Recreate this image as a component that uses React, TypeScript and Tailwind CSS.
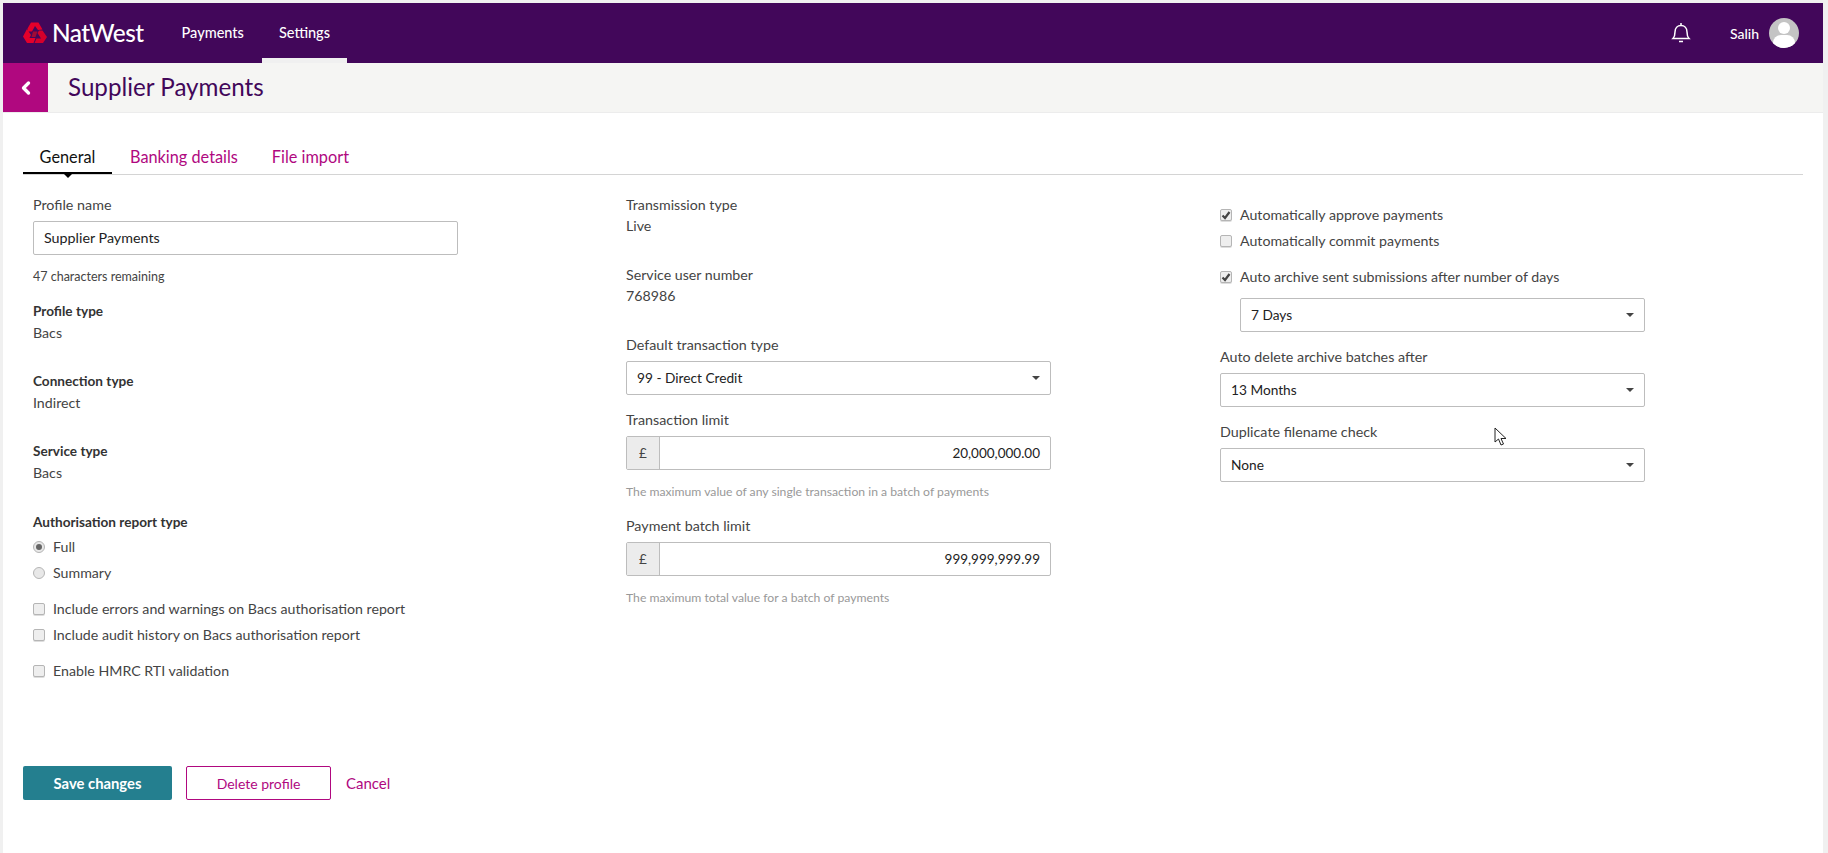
import { ChevronLeft } from "lucide-react"

const font = "font-['Lato','Open_Sans',sans-serif]"

const Logo = () => (
  <svg width="24" height="22" viewBox="0 0 24 22" className="shrink-0">
    <path d="M8 0.5 H15.5 L19.5 7.5 L15 8 L12 4 L9 9.5 H5 L4.5 6.5 Z" fill="#e4002b" />
    <path d="M4 7 L8 13 L6.5 16 H12.5 L10.5 21 H4 L0 14.5 Z" fill="#e4002b" />
    <path d="M16 8.5 H19.5 L24 15 L20 21 H11.5 L13.5 16.5 H18 L14.5 11 Z" fill="#d4002b" />
    <path d="M10 9.5 H14.5 L12.5 15 H8.5 Z" fill="#a00a35" />
  </svg>
)

const Caret = () => <span className="border-x-[4px] border-t-[4px] border-x-transparent border-t-[#444]" />

const Select = ({ value, className = "w-[425px]" }: { value: string; className?: string }) => (
  <div className={`${className} flex h-[34px] items-center justify-between rounded-[2px] border border-[#bdbdbd] bg-white pl-[10px] pr-[10px] text-[13.7px] text-[#222]`}>
    <span>{value}</span>
    <Caret />
  </div>
)

const MoneyInput = ({ value }: { value: string }) => (
  <div className="flex h-[34px] w-[425px] overflow-hidden rounded-[2px] border border-[#bdbdbd] bg-white text-[13.5px] text-[#222]">
    <span className="flex w-[33px] items-center justify-center border-r border-[#bdbdbd] bg-[#ececec] text-[#444]">£</span>
    <span className="flex flex-1 items-center justify-end pr-[10px]">{value}</span>
  </div>
)

const Check = ({ label, checked = false }: { label: string; checked?: boolean }) => (
  <label className="flex h-[26px] items-center gap-[8px] text-[14.2px] text-[#444]">
    <span className="relative flex size-[12px] items-center justify-center rounded-[2px] border border-[#b5b5b5] bg-[#eee] shadow-[0_1px_0_#ddd]">
      {checked && (
        <svg width="10" height="10" viewBox="0 0 10 10" className="absolute">
          <path d="M1.5 5.5 L4 8 L8.5 2" fill="none" stroke="#444" strokeWidth="2.2" />
        </svg>
      )}
    </span>
    {label}
  </label>
)

const Radio = ({ label, checked = false }: { label: string; checked?: boolean }) => (
  <label className="flex h-[26px] items-center gap-[8px] text-[14.2px] text-[#444]">
    <span className="flex size-[12px] items-center justify-center rounded-full border border-[#b5b5b5] bg-[#e8e8e8]">
      {checked && <span className="size-[6px] rounded-full bg-[#666]" />}
    </span>
    {label}
  </label>
)

const Info = ({ label, value, bold = false, className = "" }: { label: string; value: string; bold?: boolean; className?: string }) => (
  <div className={`text-[14.2px] leading-[21px] text-[#444] ${className}`}>
    <div className={bold ? "text-[13.6px] font-bold text-[#333]" : ""}>{label}</div>
    <div>{value}</div>
  </div>
)

const Label = ({ children }: { children: string }) => (
  <div className="mb-[6px] text-[14.3px] leading-[20px] text-[#444]">{children}</div>
)

export default function App() {
  return (
    <div className={`${font} min-h-[853px] bg-[#f0f0f0] pl-[3px] pr-[5px] pt-[3px]`}>
      <div className="min-h-[850px] bg-white">
        <header className="flex h-[60px] items-center bg-[#42075a] pl-[20px] pr-[24px] text-white">
          <Logo />
          <span className="ml-[5px] text-[24.4px] font-medium tracking-[-0.5px]">NatWest</span>
          <nav className="ml-[20px] flex h-full items-stretch text-[14.5px] font-medium">
            <a className="flex items-center px-[18px]">Payments</a>
            <a className="flex items-center border-b-[5px] border-[#f0f0f0] px-[17px] pt-[5px]">Settings</a>
          </nav>
          <div className="ml-auto flex items-center">
            <svg width="20" height="22" viewBox="0 0 20 22" fill="none" stroke="white" strokeWidth="1.5">
              <path d="M2 16.5 C4 14.5 4 12.5 4 10 C4 6 6.5 3.5 10 3.5 C13.5 3.5 16 6 16 10 C16 12.5 16 14.5 18 16.5 Z" />
              <path d="M10 1 V3.5 M8 19.5 H12" />
            </svg>
            <span className="ml-[39px] text-[14px] font-medium">Salih</span>
            <span className="relative ml-[10px] size-[30px] overflow-hidden rounded-full bg-[#c4c4c4]">
              <span className="absolute left-[9px] top-[4px] size-[12px] rounded-full bg-white" />
              <span className="absolute left-[4px] top-[17px] h-[16px] w-[22px] rounded-full bg-white" />
            </span>
          </div>
        </header>

        <div className="flex h-[50px] items-stretch border-b border-[#ececec] bg-[#f5f5f3]">
          <div className="flex w-[45px] items-center justify-center bg-[#b0087f] text-white">
            <ChevronLeft size={20} strokeWidth={4} />
          </div>
          <h1 className="ml-[20px] self-center text-[24.2px] font-normal text-[#42075a]">Supplier Payments</h1>
        </div>

        <div className="pl-[20px] pr-[20px] pt-[32px]">
          <div className="flex h-[30px] border-b border-[#d4d4d4] text-[16.3px] text-[#b0087f]">
            <div className="relative flex w-[89px] justify-center border-b-2 border-black text-[#111]">
              General
              <span className="absolute -bottom-[6px] left-1/2 -ml-[4px] border-x-[4px] border-t-[4px] border-x-transparent border-t-black" />
            </div>
            <span className="ml-[18px]">Banking details</span>
            <span className="ml-[34px]">File import</span>
          </div>

          <div className="mt-[20px] flex pl-[10px]">
            <div className="w-[593px]">
              <Label>Profile name</Label>
              <div className="flex h-[34px] w-[425px] items-center rounded-[2px] border border-[#bdbdbd] pl-[10px] text-[14.3px] text-[#222]">Supplier Payments</div>
              <p className="mt-[14px] text-[12.5px] leading-[16px] text-[#444]">47 characters remaining</p>
              <Info bold label="Profile type" value="Bacs" className="mt-[16px]" />
              <Info bold label="Connection type" value="Indirect" className="mt-[28px]" />
              <Info bold label="Service type" value="Bacs" className="mt-[28px]" />
              <div className="mt-[29px] text-[13.6px] font-bold leading-[21px] text-[#333]">Authorisation report type</div>
              <div className="mt-[1px]">
                <Radio checked label="Full" />
                <Radio label="Summary" />
              </div>
              <div className="mt-[10px]">
                <Check label="Include errors and warnings on Bacs authorisation report" />
                <Check label="Include audit history on Bacs authorisation report" />
              </div>
              <div className="mt-[10px]">
                <Check label="Enable HMRC RTI validation" />
              </div>
            </div>

            <div className="-mt-[1px] w-[594px]">
              <Info label="Transmission type" value="Live" />
              <Info label="Service user number" value="768986" className="mt-[28px]" />
              <div className="mt-[29px]">
                <Label>Default transaction type</Label>
                <Select value="99 - Direct Credit" />
              </div>
              <div className="mt-[15px]">
                <Label>Transaction limit</Label>
                <MoneyInput value="20,000,000.00" />
                <p className="mt-[14px] text-[12.2px] leading-[16px] text-[#999]">The maximum value of any single transaction in a batch of payments</p>
              </div>
              <div className="mt-[16px]">
                <Label>Payment batch limit</Label>
                <MoneyInput value="999,999,999.99" />
                <p className="mt-[14px] text-[12.2px] leading-[16px] text-[#999]">The maximum total value for a batch of payments</p>
              </div>
            </div>

            <div className="pt-[7px]">
              <Check checked label="Automatically approve payments" />
              <Check checked={false} label="Automatically commit payments" />
              <div className="mt-[10px]">
                <Check checked label="Auto archive sent submissions after number of days" />
              </div>
              <Select value="7 Days" className="ml-[20px] mt-[8px] w-[405px]" />
              <div className="mt-[15px]">
                <Label>Auto delete archive batches after</Label>
                <Select value="13 Months" />
              </div>
              <div className="mt-[15px]">
                <Label>Duplicate filename check</Label>
                <Select value="None" />
              </div>
            </div>
          </div>

          <div className="mt-[82px] flex items-center">
            <button className="h-[34px] w-[149px] rounded-[2px] bg-[#247f8f] text-[14.8px] font-bold text-white">Save changes</button>
            <button className="ml-[14px] h-[34px] w-[145px] rounded-[2px] border border-[#b0087f] text-[14px] text-[#b0087f]">Delete profile</button>
            <a className="ml-[15px] text-[15px] text-[#b0087f]">Cancel</a>
          </div>
        </div>
      </div>

      {/* mouse pointer caught in the shot */}
      <svg width="14" height="20" viewBox="0 0 14 20" className="absolute left-[1494px] top-[427px]">
        <path d="M1 1 V15 L4.5 12 L7 18 L9.5 17 L7 11.5 H12 Z" fill="white" stroke="#222" strokeWidth="1" />
      </svg>
    </div>
  )
}
